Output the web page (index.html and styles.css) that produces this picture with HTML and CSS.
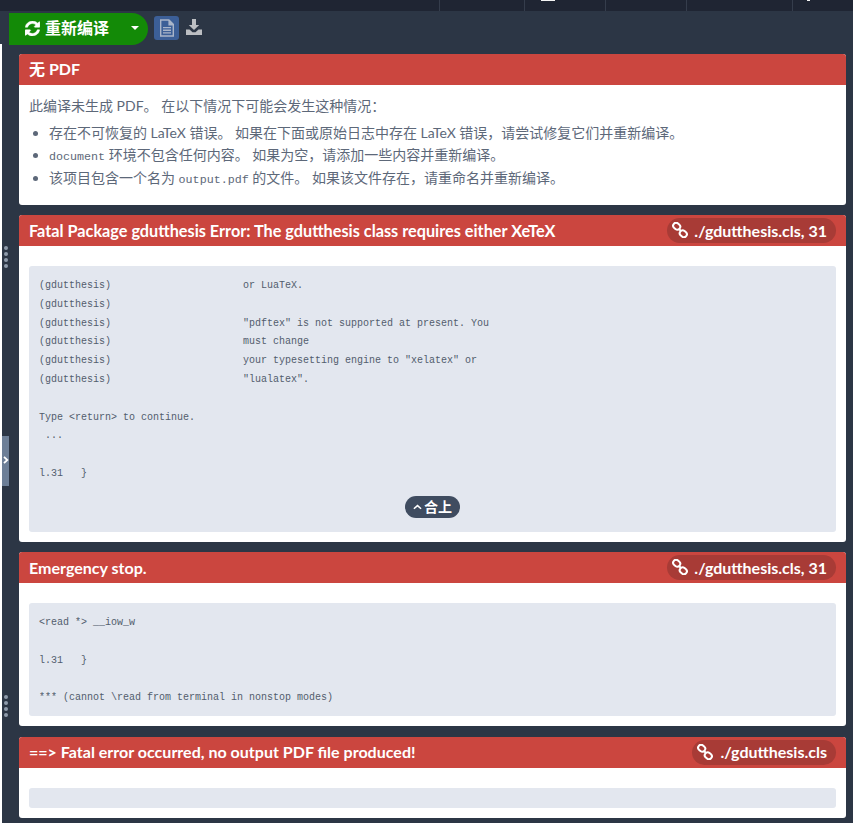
FILE: index.html
```html
<!DOCTYPE html>
<html lang="zh">
<head>
<meta charset="utf-8">
<title>重新编译</title>
<link rel="stylesheet" href="styles.css">
</head>
<body>
<div class="topbar">
  <i class="sep s1"></i><i class="sep s2"></i><i class="mark m1"></i><i class="sep s3"></i><i class="sep s4"></i><i class="sep s5"></i><i class="mark m2"></i>
</div>
<div class="toolbar">
  <button class="recompile">
    <svg class="ic-refresh" viewBox="150 120 1500 1550"><path fill="currentColor" stroke="currentColor" stroke-width="50" d="M1639 1056q0 5-1 7-64 268-268 434.5t-478 166.5q-146 0-282.5-55t-243.5-157l-129 129q-19 19-45 19t-45-19-19-45v-448q0-26 19-45t45-19h448q26 0 45 19t19 45-19 45l-137 137q71 66 161 102t187 36q134 0 250-65t186-179q11-17 53-117 8-23 30-23h192q13 0 22.5 9.5t9.5 22.5zm25-800v448q0 26-19 45t-45 19h-448q-26 0-45-19t-19-45 19-45l138-138q-148-137-349-137-134 0-250 65t-186 179q-11 17-53 117-8 23-30 23h-199q-13 0-22.5-9.5t-9.5-22.5v-7q65-268 270-434.5t480-166.5q146 0 284 55.5t245 156.5l130-129q19-19 45-19t45 19 19 45z"/></svg>
    <span class="label">重新编译</span>
    <i class="caret"></i>
  </button>
  <span class="file-btn">
    <svg viewBox="0 0 16 18" width="16" height="18"><path fill="none" stroke="currentColor" stroke-width="1.4" d="M1.7 1h8.2l4.4 4.4V17H1.7z"/><path fill="currentColor" d="M9.4 1h1l4.4 4.4v1H9.4zM4 8h8v1.3H4zM4 10.600h8v1.300H4zM4 13.200h8v1.300H4z"/></svg>
  </span>
  <span class="dl-btn">
    <svg viewBox="0 0 16 16" width="16" height="16"><path fill="currentColor" d="M6 0h4v6h3.200L8 11 2.800 6H6z"/><path fill="currentColor" d="M0 10.500h3.500L6.500 13.300h3L12.500 10.500H16V16H0z"/></svg>
  </span>
</div>
<main class="logs">
  <section class="card">
    <header class="head"><h2 class="cjk-title">无 PDF</h2></header>
    <div class="info">
      <p>此编译未生成 PDF。 在以下情况下可能会发生这种情况：</p>
      <ul>
        <li>存在不可恢复的 LaTeX 错误。 如果在下面或原始日志中存在 LaTeX 错误，请尝试修复它们并重新编译。</li>
        <li><code>document</code> 环境不包含任何内容。 如果为空，请添加一些内容并重新编译。</li>
        <li>该项目包含一个名为 <code>output.pdf</code> 的文件。 如果该文件存在，请重命名并重新编译。</li>
      </ul>
    </div>
  </section>

  <section class="card">
    <header class="head">
      <h2 class="long-title">Fatal Package gdutthesis Error: The gdutthesis class requires either XeTeX</h2>
      <a class="badge"><svg class="ic-link" viewBox="0 0 16 16"><use href="#chain"/></svg>./gdutthesis.cls, 31</a>
    </header>
    <div class="body expanded">
<pre>(gdutthesis)                      or LuaTeX.
(gdutthesis)
(gdutthesis)                      "pdftex" is not supported at present. You
(gdutthesis)                      must change
(gdutthesis)                      your typesetting engine to "xelatex" or
(gdutthesis)                      "lualatex".

Type &lt;return&gt; to continue.
 ...

l.31   }</pre>
      <div class="collapse-row">
        <button class="collapse"><svg viewBox="0 0 10 6" width="9" height="6"><path d="M1 5l4-3.600L9 5" fill="none" stroke="currentColor" stroke-width="1.700"/></svg><span class="collapse-label">合上</span></button>
      </div>
    </div>
  </section>

  <section class="card">
    <header class="head">
      <h2>Emergency stop.</h2>
      <a class="badge"><svg class="ic-link" viewBox="0 0 16 16"><use href="#chain"/></svg>./gdutthesis.cls, 31</a>
    </header>
    <div class="body">
<pre>&lt;read *&gt; __iow_w

l.31   }

*** (cannot \read from terminal in nonstop modes)</pre>
    </div>
  </section>

  <section class="card last">
    <header class="head">
      <h2>==&gt; Fatal error occurred, no output PDF file produced!</h2>
      <a class="badge"><svg class="ic-link" viewBox="0 0 16 16"><use href="#chain"/></svg>./gdutthesis.cls</a>
    </header>
    <div class="body">
      <div class="empty"></div>
    </div>
  </section>
</main>

<span class="dots d1"><i></i><i></i><i></i><i></i></span>
<span class="dots d2"><i></i><i></i><i></i><i></i></span>
<span class="toggle"><svg viewBox="0 0 6 8" width="6" height="8"><path d="M1 .8L4.300 4 1 7.200" fill="none" stroke="currentColor" stroke-width="1.800"/></svg></span>

<svg class="defs" width="0" height="0">
  <symbol id="chain" viewBox="0 0 16 16">
    <g fill="none" stroke="currentColor" stroke-width="2">
      <rect x="1" y="1.300" width="7.400" height="5.800" rx="2.900" transform="rotate(40 4.700 4.200)"/>
      <rect x="7.600" y="8.900" width="7.400" height="5.800" rx="2.900" transform="rotate(40 11.300 11.800)"/>
    </g>
    <path d="M7 7l2 2" stroke="currentColor" stroke-width="2"/>
  </symbol>
</svg>
</body>
</html>
```

FILE: styles.css
```css
* { box-sizing: border-box; }
html, body { margin: 0; padding: 0; }
body {
  width: 853px;
  height: 823px;
  overflow: hidden;
  background: #2c3645;
  font-family: "Lato", "Noto Sans CJK SC", sans-serif;
  font-size: 14px;
  color: #5d6879;
  position: relative;
}
.topbar {
  height: 11px;
  background: #1f2533;
  position: relative;
}
.sep { position: absolute; top: 0; width: 1px; height: 11px; background: #353d4c; }
.s1 { left: 439px; }
.s2 { left: 524px; }
.s3 { left: 605px; }
.s4 { left: 686px; }
.s5 { left: 792px; }
.mark { position: absolute; top: 0; height: 1px; background: #f4f4f4; }
.m1 { left: 541px; width: 14px; }
.m2 { left: 807px; width: 3px; }

.toolbar {
  height: 33px;
  display: flex;
  align-items: center;
  padding-left: 9px;
}
.recompile {
  width: 139px;
  height: 32px;
  margin-top: 2px;
  border: 0;
  border-radius: 0 16px 16px 0;
  background: #138a07;
  color: #fff;
  display: flex;
  align-items: center;
  padding: 0 0 3px 16px;
  font: 700 16px "Noto Sans CJK SC", sans-serif;
}
.ic-refresh { width: 15px; height: 15px; margin-right: 5px; margin-top: 2px; }
.caret {
  margin-left: 22px;
  margin-top: 2px;
  border-left: 4px solid transparent;
  border-right: 4px solid transparent;
  border-top: 4px solid #fff;
}
.file-btn {
  width: 25px;
  height: 24px;
  margin-left: 6px;
  border-radius: 3px;
  background: #3c5f97;
  color: #a9b5c9;
  display: flex;
  align-items: center;
  justify-content: center;
}
.dl-btn {
  width: 16px;
  height: 16px;
  margin-left: 7px;
  margin-bottom: 2px;
  color: #bcbec2;
  display: flex;
}

.logs {
  height: 779px;
  border-left: 2px solid #fff;
  padding: 10px 7px 0 17px;
  display: flex;
  flex-direction: column;
  gap: 10px;
  background: #2c3645;
}
.card {
  background: #fff;
  border-radius: 3px;
  overflow: hidden;
}
.card.last { margin-top: 1px; }
.head {
  height: 31px;
  background: #cb463f;
  color: #fff;
  display: flex;
  align-items: center;
  justify-content: space-between;
  padding: 0 10px;
}
.head h2 {
  margin: 0;
  font: 700 16.050px/20px "Lato", "Noto Sans CJK SC", sans-serif;
}
.head .long-title { font-size: 16.250px; }
.head .cjk-title { font-size: 16px; padding-bottom: 1px; }
.badge {
  height: 25px;
  padding: 0 9px 1px 5px;
  border-radius: 13px;
  background: #a83b36;
  color: #fff;
  display: flex;
  align-items: center;
  font: 700 16px "Lato", sans-serif;
}
.ic-link { width: 16px; height: 16px; margin-right: 6px; }
.last .ic-link { margin-right: 8px; }
.defs { position: absolute; }

.info { height: 120px; padding: 10px; line-height: 22.500px; }
.info p { margin: 0 0 4px; }
.info ul { margin: 0; padding-left: 20px; }
.info li::marker { color: #5d6879; }
code { font: 11.700px "Liberation Mono", monospace; }

.body { padding: 20px 10px 10px; }
pre {
  margin: 0;
  padding: 11px 10px 8px;
  background: #e3e7ef;
  border-radius: 3px;
  font: 10px/18.800px "Liberation Mono", monospace;
  color: #525d6d;
}
.expanded { position: relative; }
.expanded pre { height: 266px; }
.collapse-row {
  position: absolute;
  left: 0;
  right: 0;
  bottom: 24px;
  display: flex;
  justify-content: center;
}
.collapse {
  height: 22px;
  width: 55px;
  padding: 0;
  border: 0;
  border-radius: 11px;
  background: #3f4c60;
  color: #fff;
  display: flex;
  align-items: center;
  justify-content: center;
  gap: 2px;
  font: 700 14px "Noto Sans CJK SC", sans-serif;
}
.collapse-label { margin-top: -3px; }
.empty { height: 20px; background: #e3e7ef; border-radius: 3px; }

.dots {
  position: absolute;
  left: 4px;
  display: flex;
  flex-direction: column;
  gap: 2px;
}
.dots i { width: 4px; height: 4px; border-radius: 50%; background: #8f9bab; }
.d1 { top: 246px; }
.d2 { top: 695px; }
.toggle {
  position: absolute;
  left: 2px;
  top: 436px;
  width: 7px;
  height: 50px;
  padding-bottom: 2px;
  background: #6d7f97;
  color: #fff;
  display: flex;
  align-items: center;
  justify-content: center;
}
```
